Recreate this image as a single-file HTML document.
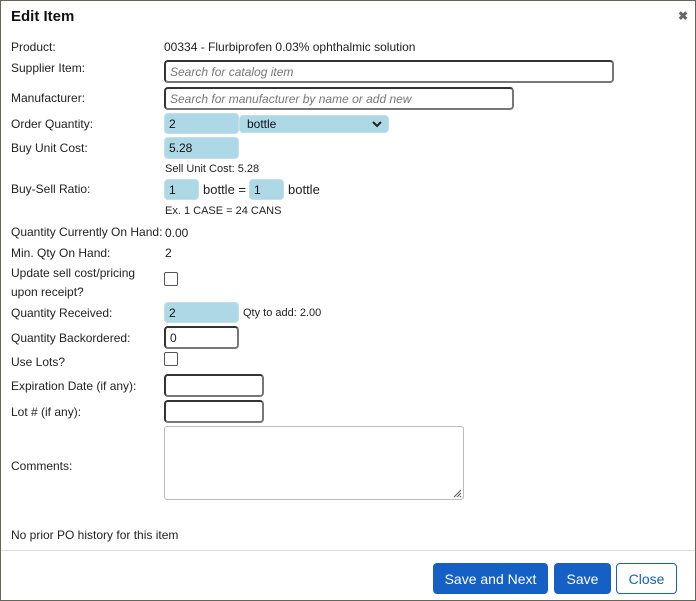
<!DOCTYPE html>
<html><head><style>
*{box-sizing:border-box;margin:0;padding:0}
body{width:696px;height:601px;overflow:hidden;background:#fff;font-family:"Liberation Sans",Arial,sans-serif;font-size:12px;color:#222}
.frame{position:absolute;left:0;top:0;width:696px;height:601px;border:1px solid #65665a}
.a{position:absolute;white-space:nowrap}
.lbl{left:11px}
.in{position:absolute;border-radius:4px;font-size:12px;padding-left:4px;display:flex;align-items:center}
.blue{background:#add8e6;border:1px solid #c5dfe8;color:#111}
.dark{border:2px solid #333;background:#fff;border-right-color:#777;border-bottom-color:#777}
.ph{color:#777;font-style:italic}
.cb{position:absolute;width:14px;height:14px;border:1px solid #555;border-radius:2px;background:#fff}
.btn{position:absolute;top:563px;height:31px;border-radius:4px;font-size:14px;display:flex;align-items:center;justify-content:center}
.pri{background:#1560c4;color:#fff}
</style></head><body>
<div class="frame"></div>
<div class="a" style="left:11px;top:8px;font-size:15px;font-weight:bold;color:#111">Edit Item</div>
<div class="a" style="left:678px;top:9px;font-size:12px;font-weight:bold;color:#666">✖</div>

<div class="a lbl" style="top:40px">Product:</div>
<div class="a" style="left:164px;top:40px">00334 - Flurbiprofen 0.03% ophthalmic solution</div>

<div class="a lbl" style="top:61px">Supplier Item:</div>
<div class="in dark" style="left:164px;top:60px;width:450px;height:23px"><span class="ph">Search for catalog item</span></div>

<div class="a lbl" style="top:91px">Manufacturer:</div>
<div class="in dark" style="left:164px;top:87px;width:350px;height:23px"><span class="ph">Search for manufacturer by name or add new</span></div>

<div class="a lbl" style="top:117px">Order Quantity:</div>
<div class="in blue" style="left:164px;top:113px;width:75px;height:21px">2</div>
<div class="in blue" style="left:239px;top:115px;width:150px;height:18px;padding-left:7px">bottle
<svg style="position:absolute;right:6px;top:5px" width="10" height="7" viewBox="0 0 10 7"><path d="M1 1l4 4 4-4" stroke="#222" stroke-width="2" fill="none"/></svg></div>

<div class="a lbl" style="top:141px">Buy Unit Cost:</div>
<div class="in blue" style="left:164px;top:137px;width:75px;height:22px">5.28</div>
<div class="a" style="left:165px;top:163px;font-size:11px">Sell Unit Cost: 5.28</div>

<div class="a lbl" style="top:182px">Buy-Sell Ratio:</div>
<div class="in blue" style="left:164px;top:179px;width:35px;height:21px">1</div>
<div class="a" style="left:203px;top:182px;font-size:13px">bottle =</div>
<div class="in blue" style="left:249px;top:179px;width:35px;height:21px">1</div>
<div class="a" style="left:288px;top:182px;font-size:13px">bottle</div>
<div class="a" style="left:165px;top:205px;font-size:11px">Ex. 1 CASE = 24 CANS</div>

<div class="a lbl" style="top:225px">Quantity Currently On Hand:</div>
<div class="a" style="left:165px;top:226px">0.00</div>
<div class="a lbl" style="top:246px">Min. Qty On Hand:</div>
<div class="a" style="left:165px;top:246px">2</div>
<div class="a lbl" style="top:266px">Update sell cost/pricing</div>
<div class="a lbl" style="top:285px">upon receipt?</div>
<div class="cb" style="left:164px;top:272px"></div>

<div class="a lbl" style="top:306px">Quantity Received:</div>
<div class="in blue" style="left:164px;top:302px;width:75px;height:21px">2</div>
<div class="a" style="left:243px;top:307px;font-size:11px">Qty to add: 2.00</div>

<div class="a lbl" style="top:331px">Quantity Backordered:</div>
<div class="in dark" style="left:164px;top:326px;width:75px;height:23px">0</div>

<div class="a lbl" style="top:355px">Use Lots?</div>
<div class="cb" style="left:164px;top:352px"></div>

<div class="a lbl" style="top:379px">Expiration Date (if any):</div>
<div class="in dark" style="left:164px;top:374px;width:100px;height:23px"></div>
<div class="a lbl" style="top:405px">Lot # (if any):</div>
<div class="in dark" style="left:164px;top:400px;width:100px;height:23px"></div>

<div class="a lbl" style="top:459px">Comments:</div>
<div style="position:absolute;left:164px;top:426px;width:300px;height:74px;border:1px solid #bbb;border-radius:3px">
<svg style="position:absolute;right:1px;bottom:1px" width="9" height="9" viewBox="0 0 9 9"><path d="M8 1L1 8M8 4L4 8M8 7L7 8" stroke="#555" stroke-width="1"/></svg></div>

<div class="a lbl" style="top:528px">No prior PO history for this item</div>
<div style="position:absolute;left:1px;top:550px;width:694px;height:1px;background:#ddd"></div>

<div class="btn pri" style="left:433px;width:115px">Save and Next</div>
<div class="btn pri" style="left:554px;width:57px">Save</div>
<div class="btn" style="left:616px;width:61px;border:1px solid #1560c4;color:#1560c4">Close</div>
</body></html>
